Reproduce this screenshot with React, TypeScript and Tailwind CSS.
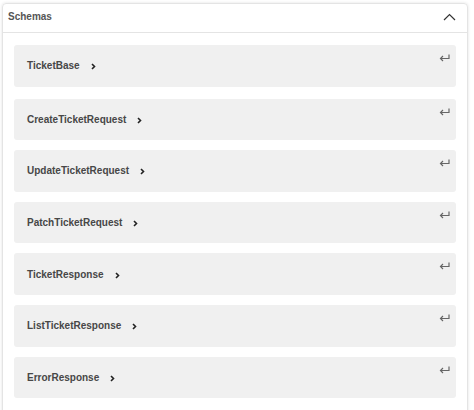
import React from "react"

const schemas = [
  "TicketBase",
  "CreateTicketRequest",
  "UpdateTicketRequest",
  "PatchTicketRequest",
  "TicketResponse",
  "ListTicketResponse",
  "ErrorResponse",
]

const ReturnIcon = () => (
  <svg width="11" height="8" viewBox="0 0 11 8" fill="none" className="text-[#666]">
    <path d="M10 0.5V4.5H1.5" stroke="currentColor" strokeWidth="1.2" />
    <path d="M4 2L1.5 4.5L4 7" stroke="currentColor" strokeWidth="1.2" />
  </svg>
)

const SchemaRow = ({ name, first }: { name: string; first?: boolean }) => (
  <div className={`relative h-[41.6px] bg-[#f0f0f0] rounded-[3px] flex items-center pl-[13px] ${first ? "mb-[2px]" : ""}`}>
    <span className="text-[10px] font-bold text-[#474747]">{name}</span>
    <svg width="5" height="7" viewBox="0 0 5 7" className="ml-[11px] mt-[2px]">
      <path d="M1 1L3.5 3.5L1 6" stroke="#222" strokeWidth="1.6" fill="none" />
    </svg>
    <div className="absolute top-[9px] right-[6px]">
      <ReturnIcon />
    </div>
  </div>
)

export default function App() {
  return (
    <div className="w-[474px] h-[410px] bg-white overflow-hidden pt-[3px] pl-[2px]" style={{ fontFamily: '"Liberation Sans", Arial, sans-serif' }}>
      <div className="w-[466px] border border-[#e4e4e4] rounded-[4px] shadow-[0_0_3px_rgba(0,0,0,0.12)]">
        <div className="h-[29px] flex items-center justify-between pl-[5px] pr-[11px] pb-[3px] border-b border-[#e4e4e4]">
          <span className="text-[10px] font-bold text-[#555]">Schemas</span>
          <svg width="13" height="8" viewBox="0 0 13 8" fill="none">
            <path d="M1 7L6.5 1.5L12 7" stroke="#333" strokeWidth="1.2" />
          </svg>
        </div>
        <div className="pt-[12px] px-[11px] pb-[30px] flex flex-col gap-[10px]">
          {schemas.map((s, i) => (
            <SchemaRow key={s} name={s} first={i === 0} />
          ))}
        </div>
      </div>
    </div>
  )
}
